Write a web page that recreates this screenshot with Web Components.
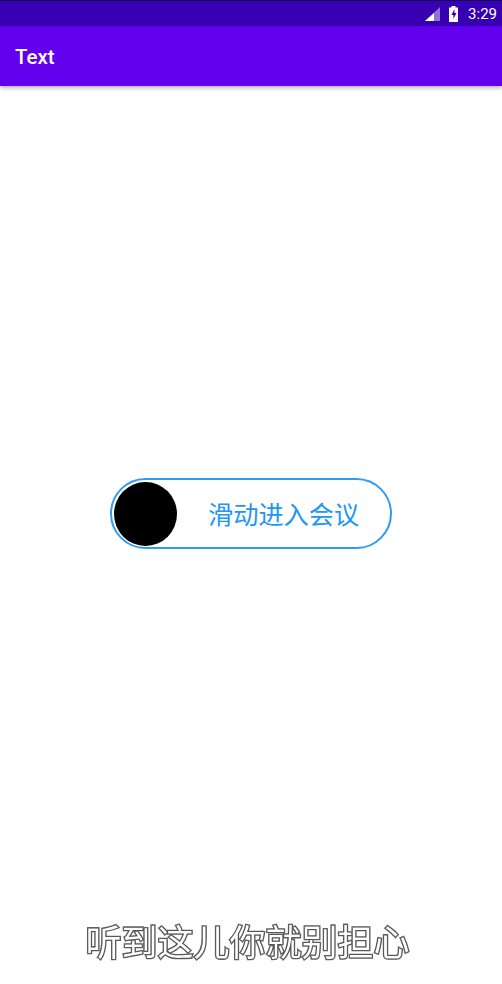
<!DOCTYPE html>
<html>
<head>
<meta charset="utf-8">
<title>Text</title>
<style>
  html, body { margin: 0; height: 100%; background: #fff; }
  body { font-family: Roboto, "Noto Sans CJK SC", sans-serif; overflow: hidden; }
</style>
</head>
<body>
<app-screen>
  <status-bar slot="status" time="3:29"></status-bar>
  <app-bar slot="bar">Text</app-bar>
  <slide-button>滑动进入会议</slide-button>
  <stroke-caption slot="caption">听到这儿你就别担心</stroke-caption>
</app-screen>

<script>
// page frame: status + toolbar on top, button in the middle, caption at the bottom
customElements.define('app-screen', class extends HTMLElement {
  constructor() {
    super();
    this.attachShadow({mode: 'open'}).innerHTML = `
      <style>
        :host { display: flex; flex-direction: column; height: 984px; }
        .middle { flex: 1; display: flex; align-items: center; justify-content: center; padding-top: 26px; }
        .bottom { display: flex; justify-content: center; padding: 0 7px 18px 0; }
      </style>
      <slot name="status"></slot>
      <slot name="bar"></slot>
      <div class="middle"><slot></slot></div>
      <div class="bottom"><slot name="caption"></slot></div>`;
  }
});

customElements.define('status-bar', class extends HTMLElement {
  constructor() {
    super();
    this.attachShadow({mode: 'open'}).innerHTML = `
      <style>
        :host { display: flex; align-items: center; justify-content: flex-end; height: 26px; box-sizing: border-box;
                border-top: 1px solid #1a0050; background: #3700b3; color: #fff; font: 15px Roboto, sans-serif; padding-right: 5px; }
        svg { display: block; }
        .signal { margin-right: 7px; }
        .battery { margin-right: 9px; }
      </style>
      <svg class="signal" width="16" height="14" viewBox="0 0 16 14">
        <path d="M15 0V14H0Z" fill="#fff" fill-opacity=".45"/>
        <path d="M9 6V14H0L9 6Z" fill="#fff"/>
      </svg>
      <svg class="battery" width="11" height="16" viewBox="0 0 11 16">
        <path d="M3.5 0h4v1.5H10V16H1V1.5h2.5Z" fill="#fff"/>
        <path d="M6.5 3 3.4 9h2v4l3.1-6h-2Z" fill="#3700b3"/>
      </svg>
      <span></span>`;
    this.shadowRoot.querySelector('span').textContent = this.getAttribute('time');
  }
});

customElements.define('app-bar', class extends HTMLElement {
  constructor() {
    super();
    this.attachShadow({mode: 'open'}).innerHTML = `
      <style>
        :host { display: flex; align-items: center; height: 60px; padding: 2px 0 0 15px; box-sizing: border-box; background: #6200ee; color: #fff;
                font: 500 20.5px Roboto, sans-serif; box-shadow: 0 2px 4px rgba(0,0,0,.3); position: relative; }
      </style>
      <slot></slot>`;
  }
});

customElements.define('slide-button', class extends HTMLElement {
  constructor() {
    super();
    this.attachShadow({mode: 'open'}).innerHTML = `
      <style>
        :host { display: flex; align-items: center; box-sizing: border-box; width: 282px; height: 71px; padding: 1px 0 0 2px;
                border: 2px solid #2f9cf4; border-radius: 36px; background: #fff; color: #2196f3;
                font: 25.2px "Noto Sans CJK SC", sans-serif; }
        .thumb { width: 63px; height: 64px; border-radius: 50%; background: #000; flex: none; }
        .label { margin: 0 0 2px 31px; white-space: nowrap; }
      </style>
      <div class="thumb"></div>
      <div class="label"><slot></slot></div>`;
  }
});

customElements.define('stroke-caption', class extends HTMLElement {
  constructor() {
    super();
    this.attachShadow({mode: 'open'}).innerHTML = `
      <style>
        :host { display: block; font: 36px/52px "Noto Sans CJK SC", sans-serif; color: #fff; white-space: nowrap;
                -webkit-text-stroke: 2.6px #6a6a6a; paint-order: stroke fill; text-shadow: 0 0 1px #111, 0 0 1px #111;
                will-change: opacity; }
      </style>
      <slot></slot>`;
  }
});
</script>
</body>
</html>
